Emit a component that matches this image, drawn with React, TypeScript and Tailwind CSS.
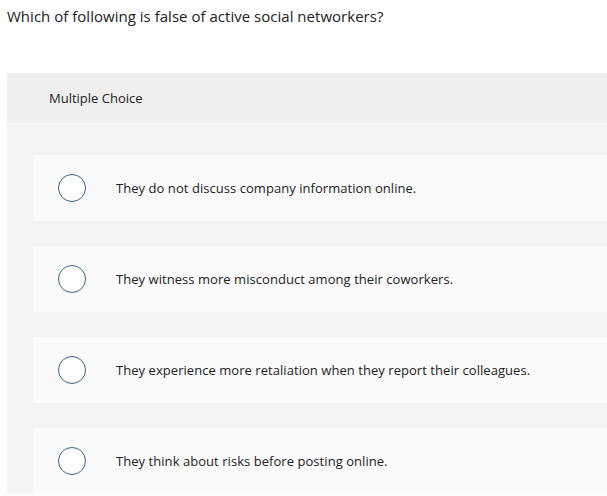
export default function App() {
  const options = [
    "They do not discuss company information online.",
    "They witness more misconduct among their coworkers.",
    "They experience more retaliation when they report their colleagues.",
    "They think about risks before posting online.",
  ];
  return (
    <div className="w-[607px] h-[496px] bg-white overflow-hidden text-[#222]" style={{ fontFamily: "'Open Sans', sans-serif" }}>
      <div className="pl-[7px] pt-[6px] text-[15px] leading-[20px] tracking-[0.02px]">Which of following is false of active social networkers?</div>
      <div className="ml-[7px] mt-[47px] bg-[#f4f4f4]">
        <div className="h-[50px] bg-[#efefef] flex items-center pl-[42px] pt-[2px] text-[13px]">Multiple Choice</div>
        <div className="pl-[26px] pt-[32px] flex flex-col gap-[25px]">
          {options.map((o) => (
            <div key={o} className="h-[66px] bg-[#fafafa] flex items-center">
              <div className="ml-[25px] w-[28px] h-[28px] rounded-full border-[1.5px] border-[#3a628c] bg-white shrink-0" />
              <div className="ml-[30px] pt-[2px] text-[13px] tracking-[0.05px]">{o}</div>
            </div>
          ))}
        </div>
      </div>
    </div>
  );
}
